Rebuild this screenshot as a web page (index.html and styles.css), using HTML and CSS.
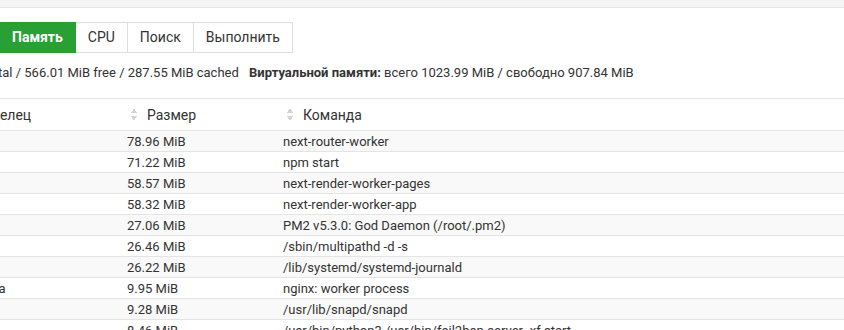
FILE: index.html
```html
<!DOCTYPE html>
<html lang="ru">
<head>
  <meta charset="UTF-8">
  <title>Процессы</title>
  <link rel="stylesheet" href="styles.css">
</head>
<body>

  <div class="topbar"></div>

  <div class="tabs">
    <span class="tab active">Память</span>
    <span class="tab">CPU</span>
    <span class="tab">Поиск</span>
    <span class="tab">Выполнить</span>
  </div>

  <div class="mem-info">
    <span class="mem-real"><b>Реальной памяти:</b> 1.94 GiB total / 566.01 MiB free / 287.55 MiB cached</span>
    <span class="mem-virt"><b>Виртуальной памяти:</b> всего 1023.99 MiB / свободно 907.84 MiB</span>
  </div>

  <table class="procs">
    <thead>
      <tr>
        <th class="col-owner"><span class="sort"></span>Владелец</th>
        <th class="col-size"><span class="sort"></span>Размер</th>
        <th><span class="sort"></span>Команда</th>
      </tr>
    </thead>
    <tbody>
      <tr><td>root</td><td>78.96 MiB</td><td>next-router-worker</td></tr>
      <tr><td>root</td><td>71.22 MiB</td><td>npm start</td></tr>
      <tr><td>root</td><td>58.57 MiB</td><td>next-render-worker-pages</td></tr>
      <tr><td>root</td><td>58.32 MiB</td><td>next-render-worker-app</td></tr>
      <tr><td>root</td><td>27.06 MiB</td><td>PM2 v5.3.0: God Daemon (/root/.pm2)</td></tr>
      <tr><td>root</td><td>26.46 MiB</td><td>/sbin/multipathd -d -s</td></tr>
      <tr><td>root</td><td>26.22 MiB</td><td>/lib/systemd/systemd-journald</td></tr>
      <tr><td>www-data</td><td>9.95 MiB</td><td>nginx: worker process</td></tr>
      <tr><td>root</td><td>9.28 MiB</td><td>/usr/lib/snapd/snapd</td></tr>
      <tr><td>root</td><td>8.46 MiB</td><td>/usr/bin/python3 /usr/bin/fail2ban-server -xf start</td></tr>
    </tbody>
  </table>

</body>
</html>
```

FILE: styles.css
```css
body {
  margin: 0;
  font-family: Roboto, 'Liberation Sans', sans-serif;
  font-size: 13px;
  color: #333;
  background: #fff;
  overflow: hidden;
}

.topbar {
  height: 7px;
  background: #f4f4f4;
  border-bottom: 1px solid #e6e6e6;
}

.tabs {
  display: flex;
  margin-top: 14px;
}

.tab {
  height: 29px;
  line-height: 29px;
  padding: 0 12px;
  border: 1px solid #dddddd;
  border-left: none;
  color: #333;
  font-size: 14px;
}

.tab.active {
  background: #28a033;
  border-color: #28a033;
  color: #fff;
  font-weight: bold;
}

.mem-info {
  margin-top: 11px;
  padding-bottom: 16px;
  border-bottom: 1px solid #e5e5e5;
  line-height: 18px;
  white-space: nowrap;
}

.mem-real {
  margin-left: -180px;
}

.mem-virt {
  margin-left: 7px;
}

.procs {
  border-collapse: collapse;
  margin-left: -53px;
  width: calc(100% + 53px);
  white-space: nowrap;
}

.procs th {
  height: 31px;
  padding: 0 0 0 4px;
  text-align: left;
  font-weight: normal;
  font-size: 14px;
  border-bottom: 1px solid #e5e5e5;
}

.col-owner {
  width: 176px;
}

.col-size {
  width: 152px;
}

.sort {
  display: inline-block;
  vertical-align: middle;
  width: 6px;
  height: 13px;
  margin: -2px 10px 0 0;
  background:
    linear-gradient(to bottom right, transparent 50%, #d4d4d4 50%) 0 0 / 3px 5px no-repeat,
    linear-gradient(to bottom left, transparent 50%, #d4d4d4 50%) 3px 0 / 3px 5px no-repeat,
    linear-gradient(to top right, transparent 50%, #d4d4d4 50%) 0 8px / 3px 5px no-repeat,
    linear-gradient(to top left, transparent 50%, #d4d4d4 50%) 3px 8px / 3px 5px no-repeat;
}

.procs td {
  height: 20px;
  padding: 0;
  border-bottom: 1px solid #e4e4e4;
}

.procs tbody tr:nth-child(odd) {
  background: #f9f9f9;
}
```
